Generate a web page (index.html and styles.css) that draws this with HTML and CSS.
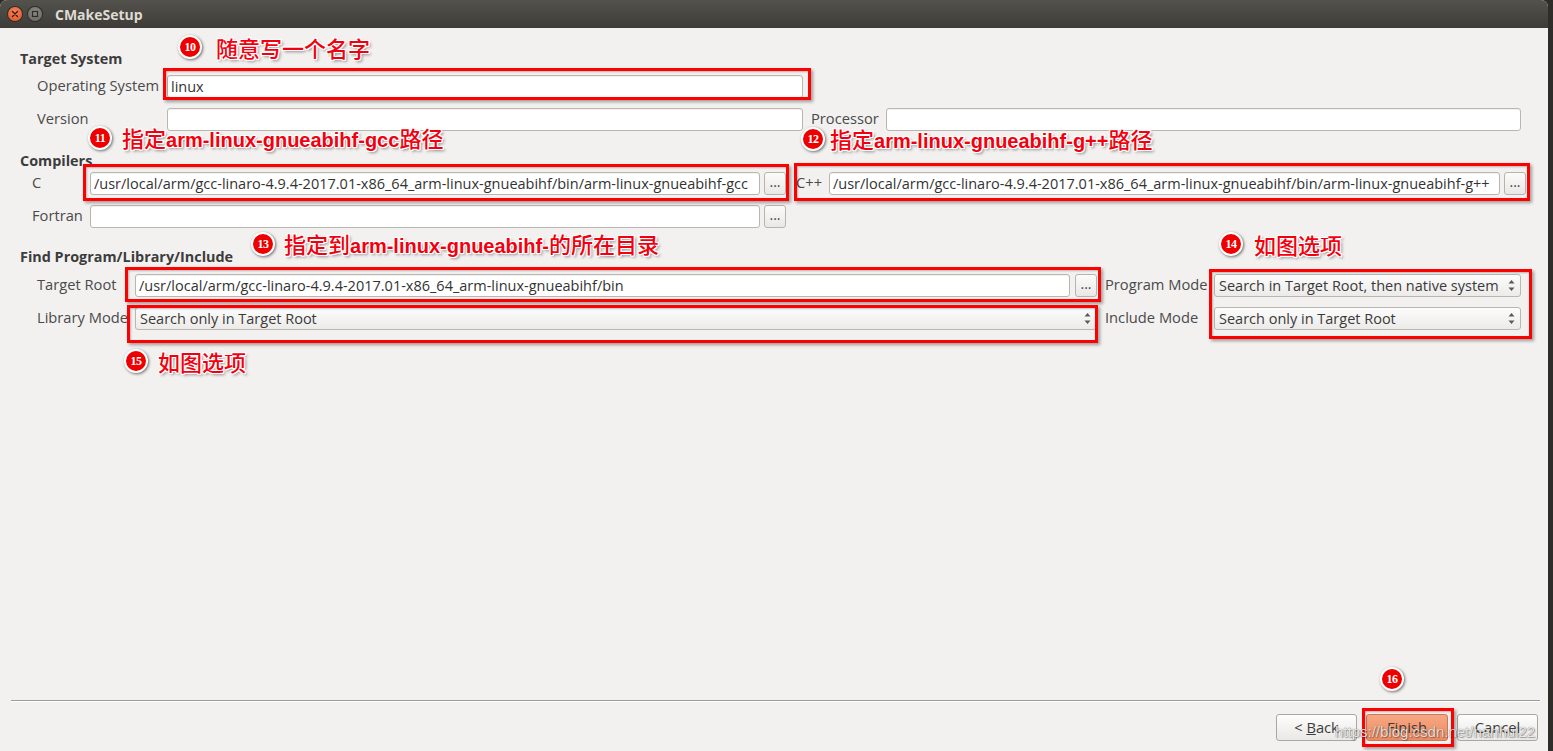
FILE: index.html
```html
<!DOCTYPE html>
<html lang="zh">
<head>
<meta charset="utf-8">
<title>CMakeSetup</title>
<link rel="stylesheet" href="styles.css">
</head>
<body>
<div class="window">
  <div class="titlebar">
    <span class="tb-btn tb-close"><svg width="8" height="8" viewBox="0 0 8 8"><path d="M1.5 1.5 L6.5 6.5 M6.5 1.5 L1.5 6.5" stroke="#3a1a10" stroke-width="1.4" stroke-linecap="round"/></svg></span>
    <span class="tb-btn tb-max"><svg width="8" height="8" viewBox="0 0 8 8"><rect x="1.5" y="1.5" width="5" height="5" fill="none" stroke="#2e2d2a" stroke-width="1.2"/></svg></span>
    <span class="tb-title">CMakeSetup</span>
  </div>

  <div class="content">
    <h3 class="heading h-target">Target System</h3>
    <div class="grid grid-target">
      <label class="lbl t1">Operating System</label>
      <div class="field t2"><span>linux</span></div>
      <label class="lbl t1">Version</label>
      <div class="field t2"></div>
      <label class="lbl t3">Processor</label>
      <div class="field t4"></div>
    </div>

    <h3 class="heading h-comp">Compilers</h3>
    <div class="grid grid-comp">
      <label class="lbl k1">C</label>
      <div class="field k2"><span>/usr/local/arm/gcc-linaro-4.9.4-2017.01-x86_64_arm-linux-gnueabihf/bin/arm-linux-gnueabihf-gcc</span></div>
      <button class="dots k3">...</button>
      <label class="lbl k4">C++</label>
      <div class="field k5"><span>/usr/local/arm/gcc-linaro-4.9.4-2017.01-x86_64_arm-linux-gnueabihf/bin/arm-linux-gnueabihf-g++</span></div>
      <button class="dots k6">...</button>
      <label class="lbl k1">Fortran</label>
      <div class="field k2"></div>
      <button class="dots k3">...</button>
    </div>

    <h3 class="heading h-find">Find Program/Library/Include</h3>
    <div class="grid grid-find">
      <label class="lbl f1">Target Root</label>
      <div class="field f2"><span>/usr/local/arm/gcc-linaro-4.9.4-2017.01-x86_64_arm-linux-gnueabihf/bin</span></div>
      <button class="dots f3">...</button>
      <label class="lbl f4">Program Mode</label>
      <div class="combo f5"><span>Search in Target Root, then native system</span><svg class="arrows" width="7" height="13" viewBox="0 0 7 13"><path d="M0.5 4.5 L3.5 1 L6.5 4.5 Z M0.5 8.5 L3.5 12 L6.5 8.5 Z" fill="#5a5a5a"/></svg></div>
      <label class="lbl f1">Library Mode</label>
      <div class="combo f23"><span>Search only in Target Root</span><svg class="arrows" width="7" height="13" viewBox="0 0 7 13"><path d="M0.5 4.5 L3.5 1 L6.5 4.5 Z M0.5 8.5 L3.5 12 L6.5 8.5 Z" fill="#5a5a5a"/></svg></div>
      <label class="lbl f4">Include Mode</label>
      <div class="combo f5"><span>Search only in Target Root</span><svg class="arrows" width="7" height="13" viewBox="0 0 7 13"><path d="M0.5 4.5 L3.5 1 L6.5 4.5 Z M0.5 8.5 L3.5 12 L6.5 8.5 Z" fill="#5a5a5a"/></svg></div>
    </div>

    <div class="footer">
      <div class="sep"></div>
      <div class="buttons">
        <button class="btn">&lt; <u>B</u>ack</button>
        <button class="btn btn-primary">Finish</button>
        <button class="btn">Cancel</button>
      </div>
    </div>
  </div>

  <div class="overlay">
    <div class="box b1"></div>
    <div class="box b2"></div>
    <div class="box b3"></div>
    <div class="box b4"></div>
    <div class="box b5"></div>
    <div class="box b6"></div>
    <div class="box b7"></div>

    <div class="note n10"><span class="badge">10</span><span class="ntext">随意写一个名字</span></div>
    <div class="note n11"><span class="badge">11</span><span class="ntext">指定<b>arm-linux-gnueabihf-gcc</b>路径</span></div>
    <div class="note n12"><span class="badge">12</span><span class="ntext">指定<b>arm-linux-gnueabihf-g++</b>路径</span></div>
    <div class="note n13"><span class="badge">13</span><span class="ntext">指定到<b>arm-linux-gnueabihf-</b>的所在目录</span></div>
    <div class="note n14"><span class="badge">14</span><span class="ntext">如图选项</span></div>
    <div class="note n15"><span class="badge">15</span><span class="ntext">如图选项</span></div>
    <div class="note n16"><span class="badge">16</span></div>

    <div class="watermark">https://blog.csdn.net/nanhui22</div>
  </div>
</div>
</body>
</html>
```

FILE: styles.css
```css
* { box-sizing: border-box; }
html, body { margin: 0; padding: 0; }
body {
  background: #2e2d2a;
  width: 1553px;
  height: 751px;
  overflow: hidden;
  font-family: "Open Sans", "Noto Sans", sans-serif;
  font-size: 14.5px;
  color: #3c3c3c;
}
.window {
  position: relative;
  width: 1548px;
  height: 751px;
  background: #f2f1f0;
  border-radius: 7px 7px 0 0;
  overflow: hidden;
  display: flex;
  flex-direction: column;
}
.titlebar {
  height: 28px;
  flex: none;
  background: linear-gradient(#53524c, #3d3c38);
  display: flex;
  align-items: center;
  padding-left: 8px;
  gap: 6px;
}
.tb-btn {
  width: 14px;
  height: 14px;
  border-radius: 50%;
  display: flex;
  align-items: center;
  justify-content: center;
}
.tb-close { background: radial-gradient(circle at 50% 35%, #f5825a, #e2541f); box-shadow: 0 0 0 1px #2e2d2a; }
.tb-max { background: radial-gradient(circle at 50% 35%, #8a8984, #65645f); box-shadow: 0 0 0 1px #2e2d2a; }
.tb-title {
  margin-left: 7px;
  color: #dfdbd2;
  font-weight: 700;
  font-size: 14px;
}

.content {
  flex: 1;
  display: flex;
  flex-direction: column;
  padding-left: 20px;
}
.heading {
  margin: 0;
  font-size: 14.4px;
  font-weight: 700;
  line-height: 18px;
  color: #3c3c3c;
}
.h-target { margin-top: 22px; }
.h-comp { margin-top: 21px; }
.h-find { margin-top: 20px; }

.grid {
  display: grid;
  grid-auto-rows: 23px;
  row-gap: 10px;
  align-items: center;
}
.grid-target {
  margin-top: 7px;
  padding-left: 17px;
  grid-template-columns: 130px 636px 8px 75px 635px;
}
.t1 { grid-column: 1; }
.t2 { grid-column: 2; }
.t3 { grid-column: 4; }
.t4 { grid-column: 5; }

.grid-comp {
  margin-top: 2px;
  padding-left: 12px;
  grid-template-columns: 58px 670px 4px 22px 10px 33px 671px 4px 22px;
}
.k1 { grid-column: 1; }
.k2 { grid-column: 2; }
.k3 { grid-column: 4; }
.k4 { grid-column: 6; }
.k5 { grid-column: 7; }
.k6 { grid-column: 9; }

.grid-find {
  margin-top: 8px;
  padding-left: 17px;
  grid-template-columns: 98px 935px 5px 22px 8px 109px 307px;
}
.f1 { grid-column: 1; }
.f2 { grid-column: 2; }
.f3 { grid-column: 4; }
.f23 { grid-column: 2 / 5; }
.f4 { grid-column: 6; }
.f5 { grid-column: 7; }

.lbl {
  white-space: nowrap;
  color: #4a4a4a;
  font-size: 14.7px;
  line-height: 20px;
  padding-bottom: 3px;
}
.field {
  height: 23px;
  background: #fff;
  border: 1px solid #b9b6b0;
  border-radius: 3px;
  box-shadow: inset 0 1px 1px rgba(0,0,0,0.06);
  display: flex;
  align-items: center;
  padding-left: 3px;
  padding-bottom: 1px;
  overflow: hidden;
  white-space: nowrap;
  color: #333;
  font-size: 14.5px;
}
.dots {
  height: 23px;
  width: 22px;
  padding: 0 0 3px;
  font-family: inherit;
  font-size: 14px;
  color: #444;
  background: linear-gradient(#fbfbfa, #e9e8e6);
  border: 1px solid #b7b4ae;
  border-radius: 3px;
  line-height: 1;
}
.combo {
  height: 23px;
  background: linear-gradient(#fcfcfc, #ecebe9);
  border: 1px solid #bab7b1;
  border-radius: 3px;
  display: flex;
  align-items: center;
  justify-content: space-between;
  padding: 0 5px 1px 4px;
  white-space: nowrap;
  overflow: hidden;
  color: #3a3a3a;
  font-size: 14.5px;
}
.arrows { flex: none; }

.footer {
  margin-top: auto;
  margin-left: -9px;
  padding-bottom: 10px;
}
.sep {
  height: 2px;
  width: 1529px;
  border-top: 1px solid #9c9ba0;
  border-bottom: 1px solid #ffffff;
}
.buttons {
  margin-top: 12px;
  display: flex;
  justify-content: flex-end;
  gap: 9px;
  padding-right: 10px;
}
.btn {
  width: 81px;
  height: 27px;
  font-family: inherit;
  font-size: 14.7px;
  color: #3c3c3c;
  background: linear-gradient(#fdfdfc, #e9e8e6);
  border: 1px solid #aaa7a1;
  border-radius: 3px;
  padding: 0 0 2px;
}
.btn-primary {
  width: 82px;
  background: linear-gradient(#f7a784, #ee8a5f);
  border-color: #c8795a;
  color: #3a3a3a;
}

/* annotation overlay */
.overlay {
  position: absolute;
  inset: 0;
  pointer-events: none;
}
.box {
  position: absolute;
  border: 3px solid #ff0000;
  box-shadow: 2px 2px 3px rgba(0,0,0,0.35), inset 1px 1px 2px rgba(0,0,0,0.25);
}
.b1 { left: 163px; top: 68px; width: 648px; height: 32px; }
.b2 { left: 83px; top: 164px; width: 706px; height: 37px; }
.b3 { left: 794px; top: 163px; width: 736px; height: 38px; }
.b4 { left: 125px; top: 267px; width: 976px; height: 35px; }
.b5 { left: 127px; top: 305px; width: 971px; height: 38px; }
.b6 { left: 1209px; top: 269px; width: 323px; height: 70px; }
.b7 { left: 1362px; top: 708px; width: 92px; height: 39px; }

.note {
  position: absolute;
  display: flex;
  align-items: center;
  height: 24px;
}
.badge {
  width: 24px;
  height: 24px;
  flex: none;
  border-radius: 50%;
  background: #ee0000;
  border: 2px solid #fff;
  box-shadow: 1px 1px 3px rgba(0,0,0,0.55);
  color: #fff;
  font-family: "Liberation Serif", serif;
  font-weight: 700;
  font-size: 12px;
  display: flex;
  align-items: center;
  justify-content: center;
  letter-spacing: -0.5px;
}
.ntext {
  font-family: "Noto Sans CJK SC", sans-serif;
  font-size: 22px;
  font-weight: 500;
  line-height: 22px;
  color: #f2000f;
  white-space: nowrap;
  text-shadow:
    1px 0 0 #fff, -1px 0 0 #fff, 0 1px 0 #fff, 0 -1px 0 #fff,
    1px 1px 0 #fff, -1px -1px 0 #fff, 1px -1px 0 #fff, -1px 1px 0 #fff,
    2px 2px 3px rgba(0,0,0,0.45);
}
.ntext b {
  font-family: "Liberation Sans", Arial, sans-serif;
  font-size: 20px;
  font-weight: 700;
}
.n10 { left: 178px; top: 35px; gap: 14px; }
.n11 { left: 88px; top: 126px; gap: 10px; }
.n12 { left: 801px; top: 127px; gap: 5px; }
.n13 { left: 251px; top: 232px; gap: 9px; }
.n14 { left: 1219px; top: 232px; gap: 11px; }
.n15 { left: 124px; top: 349px; gap: 10px; }
.n16 { left: 1380px; top: 667px; }

.watermark {
  position: absolute;
  left: 1335px;
  top: 723px;
  font-family: "Liberation Sans", Arial, sans-serif;
  font-size: 15px;
  color: rgba(255,255,255,0.85);
  text-shadow: 0 0 1px rgba(0,0,0,0.6), 1px 1px 1px rgba(0,0,0,0.3);
  white-space: nowrap;
}
```
